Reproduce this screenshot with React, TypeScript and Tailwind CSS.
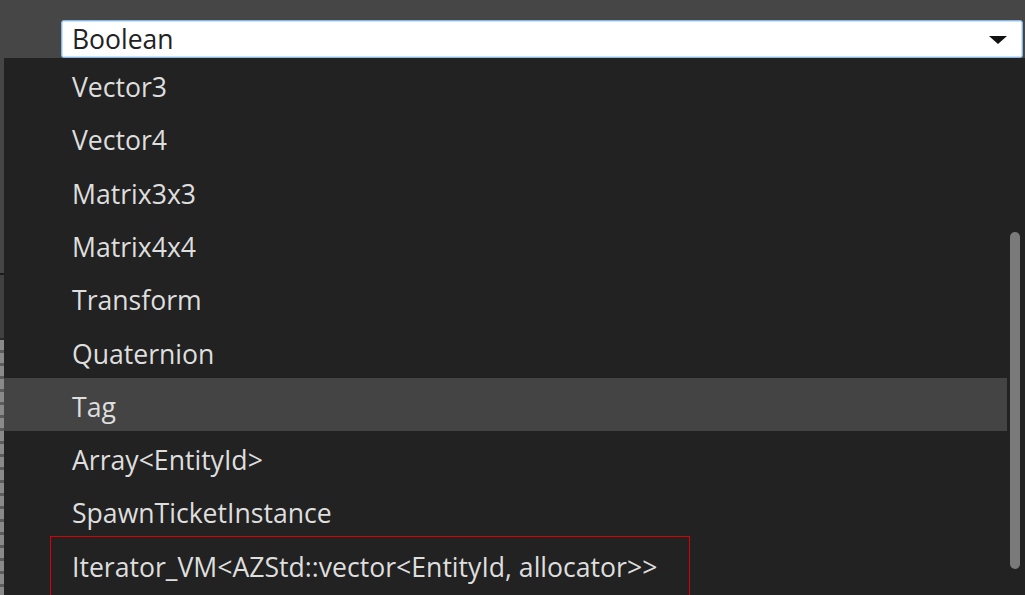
import React from "react";

const items = [
  "Vector3",
  "Vector4",
  "Matrix3x3",
  "Matrix4x4",
  "Transform",
  "Quaternion",
  "Tag",
  "Array<EntityId>",
  "SpawnTicketInstance",
  "Iterator_VM<AZStd::vector<EntityId, allocator>>",
];

export default function App() {
  return (
    <div
      className="w-[1025px] h-[595px] overflow-hidden bg-[#464646] flex flex-col"
      style={{ fontFamily: '"Open Sans", "Noto Sans", sans-serif' }}
    >
      <div className="h-[58px] shrink-0 pl-[61px] pr-[2px] pt-[20px]">
        <div className="h-[38px] bg-white border border-[#86b8e6] rounded-[3px] flex items-center pl-[10px] pr-[14px] pt-[1px] shadow-[inset_0_0_0_1px_#cfe3f5]">
          <span className="text-[26.5px] text-[#222222] leading-none flex-1">Boolean</span>
          <svg width="20" height="10" viewBox="0 0 20 10">
            <polygon points="1,1 19,1 10,9" fill="#111111" />
          </svg>
        </div>
      </div>
      <div className="flex flex-1 min-h-0">
        <div className="w-[4px] shrink-0 flex flex-col">
          <div className="h-[215px] bg-[#464646]" />
          <div className="h-[2px] bg-[#1c1c1c]" />
          <div className="h-[63px] bg-[#414141]" />
          <div className="h-[2px] bg-[#2a2a2a]" />
          <div className="flex-1 bg-[repeating-linear-gradient(180deg,#8a8a8a_0px,#8a8a8a_10px,#5c5c5c_10px,#5c5c5c_13px)]" />
        </div>
        <div className="flex-1 bg-[#222222] flex">
          <div className="flex-1 flex flex-col">
            {items.map((t) => (
              <div
                key={t}
                className={`h-[53.33px] shrink-0 flex items-center pl-[68px] pt-[5px] text-[26.6px] leading-none text-[#dedede] relative ${
                  t === "Tag" ? "bg-[#444444]" : ""
                }`}
              >
                {t}
                {t.startsWith("Iterator") && (
                  <div className="absolute left-[46px] top-[-2px] w-[640px] h-[70px] border-[1.5px] border-[#dd0000]" />
                )}
              </div>
            ))}
          </div>
          <div className="w-[18px] shrink-0 pl-[3px] pt-[174px]">
            <div className="w-[10px] h-[337px] rounded-full bg-[#7a7a7a]" />
          </div>
        </div>
      </div>
    </div>
  );
}
